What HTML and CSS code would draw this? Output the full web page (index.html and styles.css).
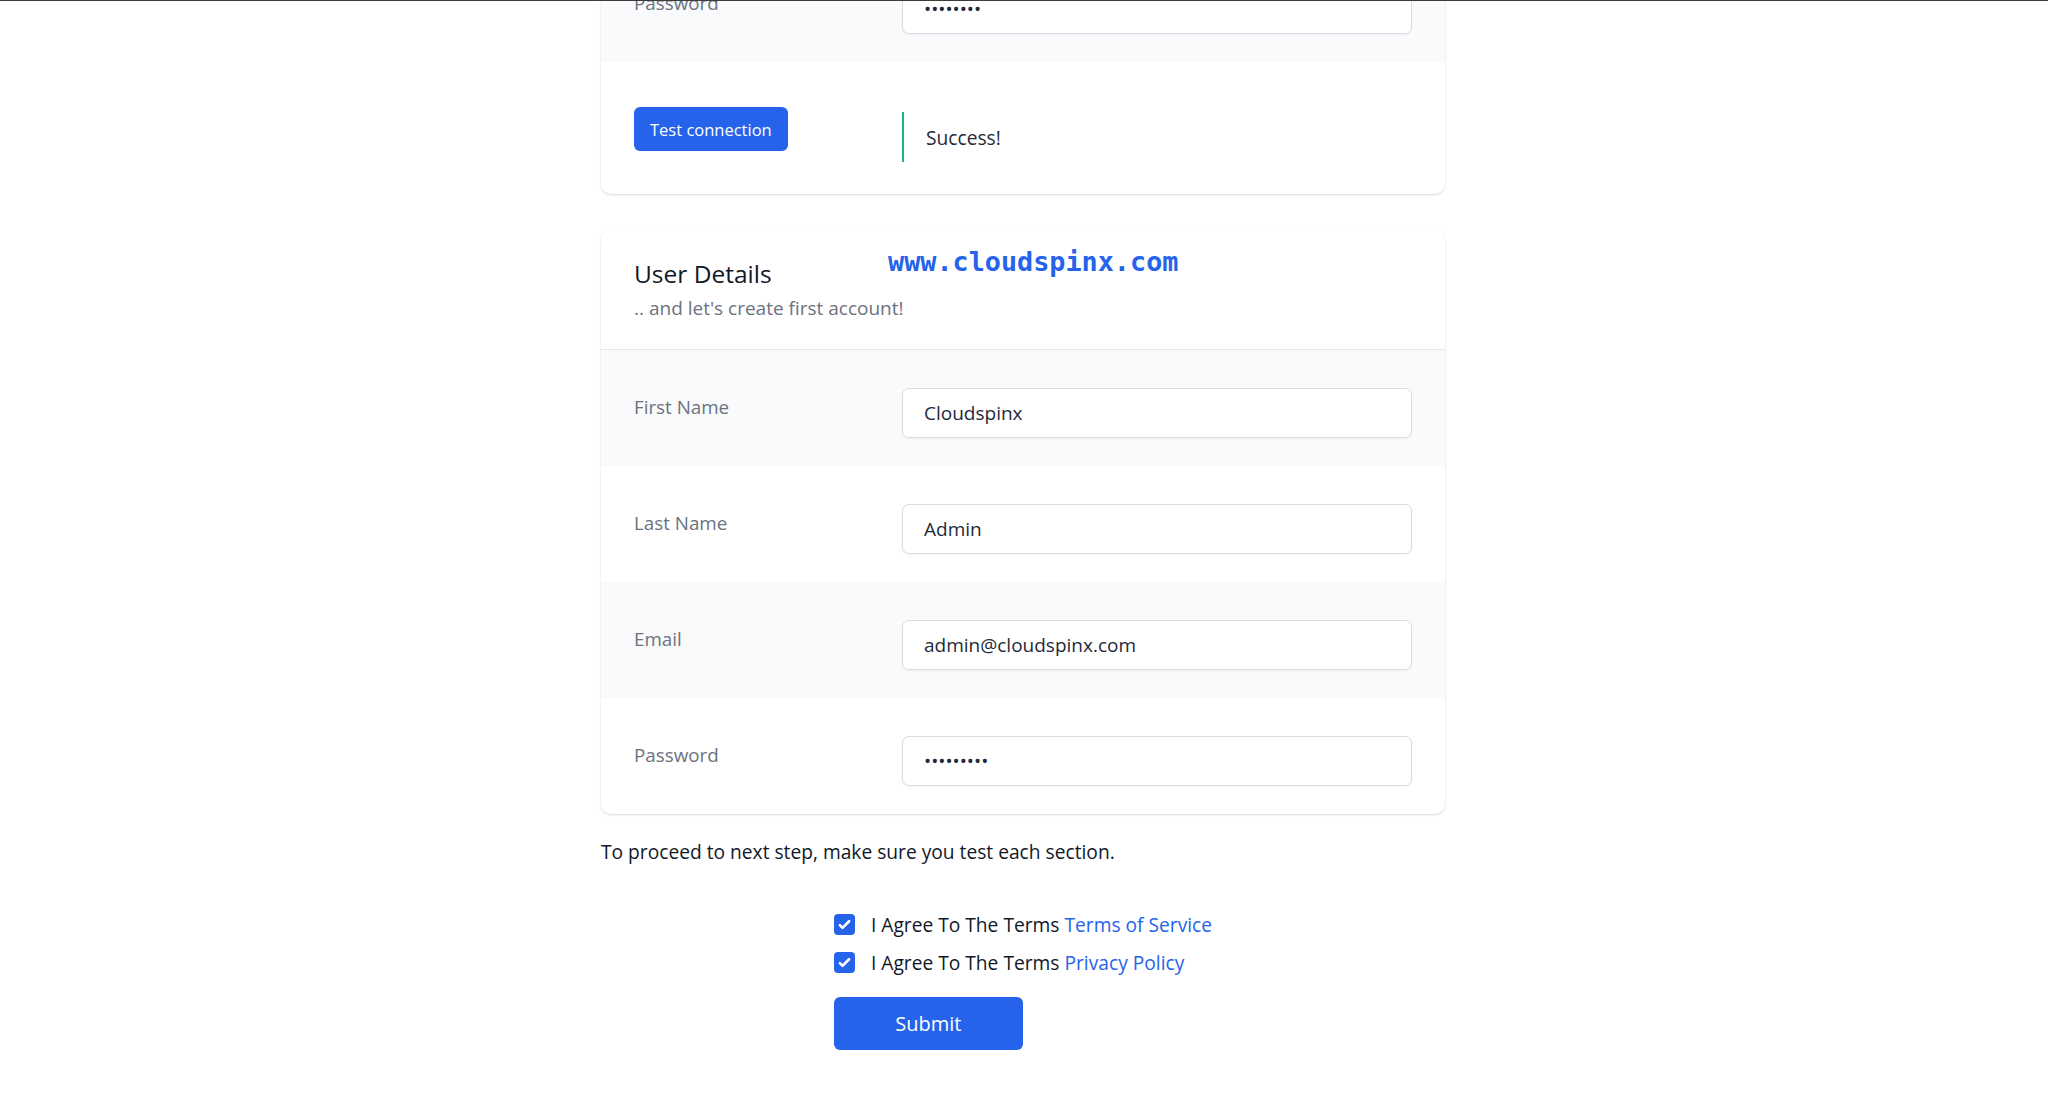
FILE: index.html
```html
<!DOCTYPE html>
<html>
<head>
    <meta charset="UTF-8">
    <link rel="stylesheet" href="styles.css">
</head>
<body>
    <div class="topline"></div>

    <main class="page">
        <section class="card card-db">
            <div class="row row-gray">
                <label class="row-label" for="db_pass">Password</label>
                <input class="field" type="password" id="db_pass" value="secret12" />
            </div>
            <div class="row row-test">
                <div><button class="btn-test" type="button">Test connection</button></div>
                <div class="status">Success!</div>
            </div>
        </section>

        <section class="card card-user">
            <div class="card-head">
                <h3>User Details</h3>
                <p>.. and let's create first account!</p>
                <span class="watermark">www.cloudspinx.com</span>
            </div>
            <div class="row row-gray">
                <label class="row-label" for="first_name">First Name</label>
                <input class="field" type="text" id="first_name" value="Cloudspinx" />
            </div>
            <div class="row">
                <label class="row-label" for="last_name">Last Name</label>
                <input class="field" type="text" id="last_name" value="Admin" />
            </div>
            <div class="row row-gray">
                <label class="row-label" for="email">Email</label>
                <input class="field" type="text" id="email" value="admin@cloudspinx.com" />
            </div>
            <div class="row">
                <label class="row-label" for="password">Password</label>
                <input class="field" type="password" id="password" value="secret123" />
            </div>
        </section>

        <p class="note">To proceed to next step, make sure you test each section.</p>

        <div class="agree-wrap">
            <div class="agree">
                <label class="check-row">
                    <span class="check"><svg viewBox="0 0 16 16" width="21" height="21"><path fill="#fff" d="M12.207 4.793a1 1 0 010 1.414l-5 5a1 1 0 01-1.414 0l-2-2a1 1 0 011.414-1.414L6.5 9.086l4.293-4.293a1 1 0 011.414 0z"/></svg></span>
                    I Agree To The Terms&nbsp;<a href="#">Terms of Service</a>
                </label>
                <label class="check-row">
                    <span class="check"><svg viewBox="0 0 16 16" width="21" height="21"><path fill="#fff" d="M12.207 4.793a1 1 0 010 1.414l-5 5a1 1 0 01-1.414 0l-2-2a1 1 0 011.414-1.414L6.5 9.086l4.293-4.293a1 1 0 011.414 0z"/></svg></span>
                    I Agree To The Terms&nbsp;<a href="#">Privacy Policy</a>
                </label>
                <button class="btn-submit" type="button">Submit</button>
            </div>
        </div>
    </main>
</body>
</html>
```

FILE: styles.css
```css
body {
    margin: 0;
    background: #fff;
    font-family: 'Open Sans', 'Noto Sans', Arial, sans-serif;
    color: #111827;
}

.topline {
    position: fixed;
    top: 0;
    left: 0;
    right: 0;
    height: 1px;
    background: #3c3c3c;
    z-index: 5;
}

.page {
    width: 844px;
    margin: -54px auto 0 auto;
    padding-right: 2px;
}

.card {
    background: #fff;
    border-radius: 10px;
    box-shadow: 0 1px 3px rgba(0, 0, 0, 0.1), 0 1px 2px rgba(0, 0, 0, 0.06);
    overflow: hidden;
}

.card-user {
    margin-top: 35px;
    position: relative;
}

.row {
    display: grid;
    grid-template-columns: 268px 1fr;
    padding: 38px 33px 28px 33px;
}

.row-gray {
    background: #f9fafb;
}

.row-label {
    font-size: 18.8px;
    line-height: 25px;
    padding-top: 7px;
    color: #6b7280;
}

.field {
    box-sizing: border-box;
    height: 50px;
    width: 100%;
    border: 1px solid #d8dbe0;
    border-radius: 7px;
    box-shadow: 0 1px 2px rgba(0, 0, 0, 0.05);
    padding: 0 21px;
    font-family: 'Open Sans', 'Noto Sans', Arial, sans-serif;
    font-size: 19px;
    color: #1f2937;
    background: #fff;
}

.row-test {
    padding: 45px 33px 32px 33px;
}

.btn-test {
    height: 44px;
    padding: 0 16px;
    border: 0;
    border-radius: 6px;
    background: #2563eb;
    color: #fff;
    font-family: 'Open Sans', 'Noto Sans', Arial, sans-serif;
    font-size: 16.5px;
}

.status {
    margin-top: 5px;
    height: 50px;
    border-left: 2px solid #10b981;
    padding-left: 22px;
    display: flex;
    align-items: center;
    font-size: 19.2px;
    color: #1f2937;
}

.card-head {
    padding: 29px 33px 27px 33px;
    border-bottom: 1px solid #e5e7eb;
}

.card-head h3 {
    margin: 0;
    font-size: 24.5px;
    line-height: 32px;
    font-weight: 400;
    color: #111827;
}

.card-head p {
    margin: 5px 0 0 0;
    font-size: 19px;
    line-height: 27px;
    color: #6b7280;
}

.watermark {
    position: absolute;
    left: 287px;
    top: 17px;
    font-family: 'DejaVu Sans Mono', 'Liberation Mono', monospace;
    font-weight: bold;
    font-size: 26.8px;
    line-height: 32px;
    color: #2563eb;
}

.note {
    margin: 24px 0 0 0;
    font-size: 19.2px;
    line-height: 27px;
    color: #111827;
}

.agree-wrap {
    display: flex;
    justify-content: center;
    margin-top: 40px;
}

.agree {
    display: flex;
    flex-direction: column;
    align-items: flex-start;
}

.check-row {
    display: flex;
    align-items: center;
    height: 38px;
    font-size: 19.2px;
    color: #111827;
}

.check {
    width: 21px;
    height: 21px;
    border-radius: 4px;
    background: #2563eb;
    margin-right: 16px;
    display: flex;
}

.check-row a {
    color: #2563eb;
    text-decoration: none;
}

.btn-submit {
    margin-top: 16px;
    width: 189px;
    height: 53px;
    border: 0;
    border-radius: 6px;
    background: #2563eb;
    color: #fff;
    font-family: 'Open Sans', 'Noto Sans', Arial, sans-serif;
    font-size: 20px;
}
```
